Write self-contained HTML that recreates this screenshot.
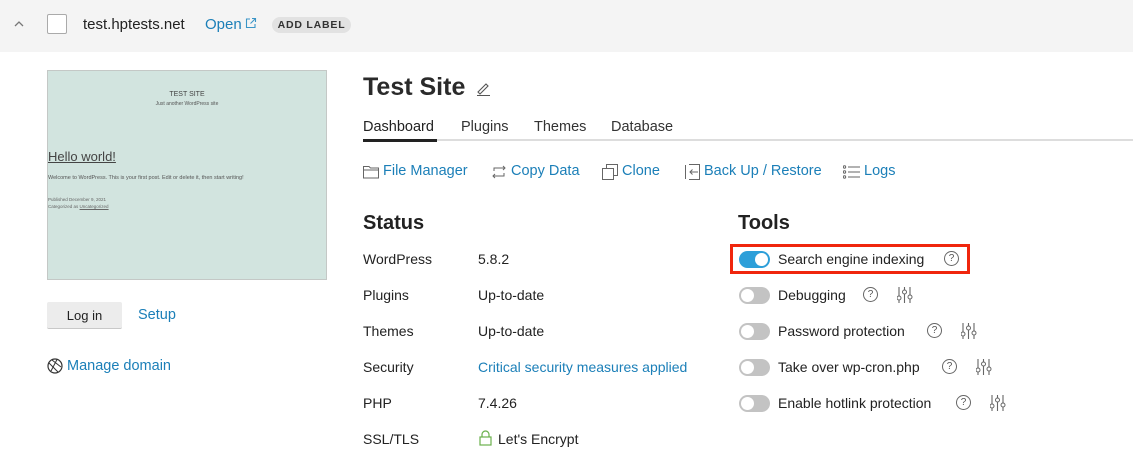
<!DOCTYPE html>
<html><head><meta charset="utf-8"><style>
*{margin:0;padding:0;box-sizing:border-box}
body{width:1133px;height:470px;overflow:hidden;background:#fff;font-family:"Liberation Sans",sans-serif;color:#222;font-size:14px;position:relative}
.a{position:absolute;white-space:nowrap}
.blue{color:#1b7fb8}
.hdr{position:absolute;left:0;top:0;width:1133px;height:52px;background:#f4f4f4}
.tg{position:absolute;width:31px;height:17px;border-radius:9px;background:#c3c3c3}
.tg::after{content:"";position:absolute;left:2px;top:2px;width:13px;height:13px;border-radius:50%;background:#fff}
.tg.on{background:#2d9fd9}
.tg.on::after{left:16px}
.q{position:absolute;width:15px;height:15px;border:1.2px solid #666;border-radius:50%;font-size:10px;text-align:center;line-height:13px;color:#555}
</style></head><body>
<div class="hdr"></div>
<svg class="a" style="left:14px;top:20px" width="10" height="8"><path d="M1 6 L5 2 L9 6" fill="none" stroke="#777" stroke-width="1.3"/></svg>
<div class="a" style="left:47px;top:14px;width:20px;height:20px;border:1px solid #aaa;background:#fff;border-radius:2px"></div>
<div class="a" style="left:83px;top:16px;font-size:15px;color:#222">test.hptests.net</div>
<div class="a blue" style="left:205px;top:16px;font-size:15px">Open</div>
<svg class="a" style="left:245px;top:17px" width="12" height="12"><path d="M5 2H1.5V10.5H10V7M7 1.5H10.5V5M10.5 1.5L5.5 6.5" fill="none" stroke="#3a95c7" stroke-width="1.1"/></svg>
<div class="a" style="left:272px;top:17px;width:79px;height:16px;border-radius:8px;background:#e2e2e2;font-size:10.5px;font-weight:bold;letter-spacing:.8px;text-align:center;line-height:16px;color:#333">ADD LABEL</div>

<div class="a" style="left:47px;top:70px;width:280px;height:210px;background:#d2e4df;border:1px solid #c4c8c6">
 <div class="a" style="left:0;width:278px;top:20px;text-align:center;font-size:7px;color:#444">TEST SITE</div>
 <div class="a" style="left:0;width:278px;top:30px;text-align:center;font-size:5px;color:#555">Just another WordPress site</div>
 <div class="a" style="left:0;top:78px;font-size:13px;color:#444;text-decoration:underline">Hello world!</div>
 <div class="a" style="left:0;top:104px;font-size:5.5px;color:#555">Welcome to WordPress. This is your first post. Edit or delete it, then start writing!</div>
 <div class="a" style="left:0;top:126px;font-size:4.5px;color:#666">Published December 9, 2021</div>
 <div class="a" style="left:0;top:133px;font-size:4.5px;color:#666">Categorized as <u>Uncategorized</u></div>
</div>
<div class="a" style="left:47px;top:302px;width:75px;height:27px;background:#ececec;border-bottom:1px solid #c8c8c8;border-radius:2px;text-align:center;line-height:27px;font-size:13px">Log in</div>
<div class="a blue" style="left:138px;top:307px;font-size:14.5px">Setup</div>
<svg class="a" style="left:47px;top:358px" width="16" height="16"><circle cx="8" cy="8" r="7" fill="none" stroke="#333" stroke-width="1.2"/><path d="M2 5L11 14M5 2L14 9M4 13L10 1.5" fill="none" stroke="#333" stroke-width="1"/></svg>
<div class="a blue" style="left:67px;top:358px;font-size:14.5px">Manage domain</div>

<div class="a" style="left:363px;top:73px;font-size:25px;font-weight:bold;color:#2a2a2a">Test Site</div>
<svg class="a" style="left:476px;top:81px" width="15" height="15"><path d="M2 11L10 3L12 5L4 13Z M1 14.5H14" fill="none" stroke="#555" stroke-width="1.1"/></svg>
<div class="a" style="left:363px;top:119px;font-size:14.5px">Dashboard</div>
<div class="a" style="left:461px;top:119px;font-size:14.5px;color:#333">Plugins</div>
<div class="a" style="left:534px;top:119px;font-size:14.5px;color:#333">Themes</div>
<div class="a" style="left:611px;top:119px;font-size:14.5px;color:#333">Database</div>
<div class="a" style="left:363px;top:139px;width:770px;height:2px;background:#ddd"></div>
<div class="a" style="left:363px;top:139px;width:74px;height:3px;background:#222"></div>

<svg class="a" style="left:363px;top:165px" width="16" height="14"><path d="M.5 1.5H6L7.5 3H15.5V13H.5Z M.5 5H15.5" fill="none" stroke="#666" stroke-width="1"/></svg>
<div class="a blue" style="left:383px;top:163px;font-size:14.5px">File Manager</div>
<svg class="a" style="left:491px;top:165px" width="16" height="14"><path d="M3 6V3H14M12 1L14 3L12 5M13 8V11H2M4 9L2 11L4 13" fill="none" stroke="#666" stroke-width="1"/></svg>
<div class="a blue" style="left:511px;top:163px;font-size:14.5px">Copy Data</div>
<svg class="a" style="left:602px;top:164px" width="16" height="16"><path d="M.5 4.5H11.5V15.5H.5Z M4.5 4.5V.5H15.5V11.5H11.5" fill="none" stroke="#666" stroke-width="1"/></svg>
<div class="a blue" style="left:622px;top:163px;font-size:14.5px">Clone</div>
<svg class="a" style="left:685px;top:164px" width="15" height="16"><path d="M4 .5H14.5V15.5H4 M.5 1V15 M13 8H5M7.5 5.5L5 8L7.5 10.5" fill="none" stroke="#666" stroke-width="1"/></svg>
<div class="a blue" style="left:704px;top:163px;font-size:14.5px">Back Up / Restore</div>
<svg class="a" style="left:843px;top:165px" width="17" height="14"><circle cx="1.5" cy="2" r="1.2" fill="none" stroke="#666"/><circle cx="1.5" cy="7" r="1.2" fill="none" stroke="#666"/><circle cx="1.5" cy="12" r="1.2" fill="none" stroke="#666"/><path d="M5 2H17M5 7H17M5 12H17" stroke="#666"/></svg>
<div class="a blue" style="left:864px;top:163px;font-size:14.5px">Logs</div>

<div class="a" style="left:363px;top:212px;font-size:20px;font-weight:bold">Status</div>
<div class="a" style="left:738px;top:212px;font-size:20px;font-weight:bold">Tools</div>

<div class="a" style="left:363px;top:251px">WordPress</div><div class="a" style="left:478px;top:251px">5.8.2</div>
<div class="a" style="left:363px;top:287px">Plugins</div><div class="a" style="left:478px;top:287px">Up-to-date</div>
<div class="a" style="left:363px;top:323px">Themes</div><div class="a" style="left:478px;top:323px">Up-to-date</div>
<div class="a" style="left:363px;top:359px">Security</div><div class="a blue" style="left:478px;top:359px">Critical security measures applied</div>
<div class="a" style="left:363px;top:395px">PHP</div><div class="a" style="left:478px;top:395px">7.4.26</div>
<div class="a" style="left:363px;top:431px">SSL/TLS</div>
<svg class="a" style="left:479px;top:430px" width="13" height="16"><path d="M3 7V4.5A3.5 3.5 0 0 1 10 4.5V7" fill="none" stroke="#6ab04c" stroke-width="1.2"/><rect x="1" y="7" width="11" height="8" fill="none" stroke="#6ab04c" stroke-width="1.2"/></svg>
<div class="a" style="left:498px;top:431px">Let's Encrypt</div>

<div class="a" style="left:730px;top:244px;width:240px;height:30px;border:3px solid #f0260d"></div>
<div class="tg on" style="left:739px;top:251px"></div>
<div class="a" style="left:778px;top:251px">Search engine indexing</div>
<div class="q" style="left:944px;top:251px">?</div>

<div class="tg" style="left:739px;top:287px"></div><div class="a" style="left:778px;top:287px">Debugging</div><div class="q" style="left:863px;top:287px">?</div>
<div class="tg" style="left:739px;top:323px"></div><div class="a" style="left:778px;top:323px">Password protection</div><div class="q" style="left:927px;top:323px">?</div>
<div class="tg" style="left:739px;top:359px"></div><div class="a" style="left:778px;top:359px">Take over wp-cron.php</div><div class="q" style="left:942px;top:359px">?</div>
<div class="tg" style="left:739px;top:395px"></div><div class="a" style="left:778px;top:395px">Enable hotlink protection</div><div class="q" style="left:956px;top:395px">?</div>

<svg width="0" height="0" style="position:absolute"><defs><g id="sl"><path d="M2 0V16M7.5 0V16M13 0V16" stroke="#666" stroke-width="1.1"/><circle cx="2" cy="11" r="2" fill="#fff" stroke="#666"/><circle cx="7.5" cy="5" r="2" fill="#fff" stroke="#666"/><circle cx="13" cy="10" r="2" fill="#fff" stroke="#666"/></g></defs></svg>
<svg class="a" style="left:897px;top:287px" width="16" height="17"><use href="#sl"/></svg>
<svg class="a" style="left:961px;top:323px" width="16" height="17"><use href="#sl"/></svg>
<svg class="a" style="left:976px;top:359px" width="16" height="17"><use href="#sl"/></svg>
<svg class="a" style="left:990px;top:395px" width="16" height="17"><use href="#sl"/></svg>
</body></html>
